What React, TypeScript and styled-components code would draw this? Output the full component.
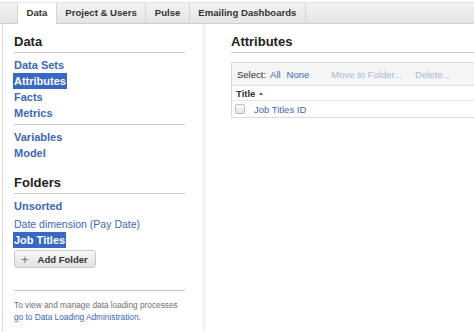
import styled, { createGlobalStyle } from "styled-components";

const GlobalStyle = createGlobalStyle`
    html, body {
        margin: 0;
        padding: 0;
        background: #fff;
    }
    body {
        font-family: "Liberation Sans", Arial, Helvetica, sans-serif;
        color: #333;
        overflow: hidden;
    }
`;

interface TabProps {
    $active?: boolean;
}

interface LinkProps {
    $selected?: boolean;
    $plain?: boolean;
    $gap?: number;
}

const Page = styled.div`
    width: 474px;
    height: 332px;
    display: flex;
    flex-direction: column;
`;

const TabBar = styled.div`
    margin-top: 2px;
    height: 20px;
    display: flex;
    padding-left: 17px;
    background: linear-gradient(#f3f3f3, #e4e4e4);
    border-top: 1px solid #e6e6e6;
    border-bottom: 1px solid #d2d2d2;
`;

const Tab = styled.div<TabProps>`
    padding: 0 8.5px;
    height: ${props => props.$active ? "21px" : "20px"};
    line-height: 20px;
    font-size: 9.6px;
    font-weight: bold;
    color: #333;
    background: ${props => props.$active ? "#fff" : "transparent"};
    border-right: 1px solid #d4d4d4;
    border-left: ${props => props.$active ? "1px solid #d4d4d4" : "none"};
    position: relative;
    z-index: 1;
`;

const Body = styled.div`
    flex: 1;
    display: flex;
    margin-left: 2px;
    border-left: 1px solid #dcdcdc;
`;

const Sidebar = styled.div`
    width: 171px;
    padding: 10px 18px 0 11px;
    border-right: 1px solid #ececec;
    box-shadow: 2px 0 3px rgba(0, 0, 0, 0.035);
    display: flex;
    flex-direction: column;
`;

const Main = styled.div`
    flex: 1;
    padding: 10px 0 0 27px;
    display: flex;
    flex-direction: column;
`;

const Heading = styled.h2<{ $top?: number }>`
    margin: ${props => props.$top ?? 0}px 0 0 0;
    font-size: 13px;
    line-height: 16px;
    font-weight: bold;
    color: #222;
    padding-bottom: 2px;
    border-bottom: 1px solid #c8c8c8;
`;

const LinkList = styled.div<{ $bottom?: number }>`
    display: flex;
    flex-direction: column;
    align-items: flex-start;
    padding: 4px 0 ${props => props.$bottom ?? 3}px;
`;

const Divider = styled.div`
    height: 1px;
    background: #c8c8c8;
`;

const NavLink = styled.span<LinkProps>`
    font-size: ${props => props.$plain ? "10.5px" : "11px"};
    line-height: 16px;
    margin-bottom: ${props => props.$gap ?? 0}px;
    font-weight: ${props => props.$plain ? "normal" : "bold"};
    color: ${props => props.$selected ? "#fff" : "#3c67b4"};
    background: ${props => props.$selected ? "#3868c4" : "transparent"};
    padding: 0 1px;
    margin-left: -1px;
`;

const AddButton = styled.button`
    margin: 2px 0 0;
    width: 82px;
    height: 18px;
    padding: 0 0 0 6px;
    display: flex;
    align-items: center;
    gap: 9px;
    border: 1px solid #c9c9c9;
    border-radius: 3px;
    background: linear-gradient(#f7f7f7, #e2e2e2);
    font-family: inherit;
    font-size: 9.5px;
    font-weight: bold;
    color: #333;
`;

const Plus = styled.span`
    font-size: 13px;
    font-weight: normal;
    color: #777;
    line-height: 13px;
`;

const Footer = styled.div`
    margin-top: 22px;
    padding-top: 8px;
    border-top: 1px solid #c8c8c8;
    font-size: 8.3px;
    line-height: 12px;
    color: #707070;
`;

const FooterLink = styled.span`
    color: #3c67b4;
`;

const Table = styled.div`
    margin-top: 9px;
    border: 1px solid #dadada;
    border-right: none;
    font-size: 9.5px;
`;

const ToolRow = styled.div`
    height: 22px;
    display: flex;
    align-items: center;
    padding-left: 5px;
    background: #f5f5f5;
    border-bottom: 1px solid #e0e0e0;
    color: #333;
`;

const Action = styled.span<{ $disabled?: boolean; $space?: number }>`
    color: ${props => props.$disabled ? "#a9b9d6" : "#3c67b4"};
    margin-left: ${props => props.$space ?? 4}px;
`;

const HeadRow = styled.div`
    height: 14px;
    display: flex;
    align-items: center;
    padding-left: 4px;
    font-weight: bold;
    color: #333;
    border-bottom: 1px solid #e6e6e6;
`;

const SortArrow = styled.span`
    width: 0;
    height: 0;
    margin-left: 4px;
    border-left: 2.5px solid transparent;
    border-right: 2.5px solid transparent;
    border-bottom: 3px solid #3c67b4;
`;

const DataRow = styled.div`
    height: 16px;
    display: flex;
    align-items: center;
    padding-left: 3px;
`;

const Check = styled.span`
    width: 8px;
    height: 8px;
    border: 1px solid #bdbdbd;
    border-radius: 2px;
    background: linear-gradient(#fdfdfd, #e4e4e4);
`;

const RowLink = styled.span`
    margin-left: 9px;
    color: #3c67b4;
`;

export default function App() {
    const tabs = ["Data", "Project & Users", "Pulse", "Emailing Dashboards"];

    return (
        <Page>
            <GlobalStyle />
            <TabBar>
                {tabs.map((t, i) => (
                    <Tab key={t} $active={i === 0}>{t}</Tab>
                ))}
            </TabBar>
            <Body>
                <Sidebar>
                    <Heading>Data</Heading>
                    <LinkList>
                        <NavLink>Data Sets</NavLink>
                        <NavLink $selected>Attributes</NavLink>
                        <NavLink>Facts</NavLink>
                        <NavLink>Metrics</NavLink>
                    </LinkList>
                    <Divider />
                    <LinkList>
                        <NavLink>Variables</NavLink>
                        <NavLink>Model</NavLink>
                    </LinkList>
                    <Heading $top={11}>Folders</Heading>
                    <LinkList $bottom={0}>
                        <NavLink $gap={2}>Unsorted</NavLink>
                        <NavLink $plain>Date dimension (Pay Date)</NavLink>
                        <NavLink $selected>Job Titles</NavLink>
                    </LinkList>
                    <AddButton>
                        <Plus>+</Plus>
                        Add Folder
                    </AddButton>
                    <Footer>
                        To view and manage data loading processes<br />
                        <FooterLink>go to Data Loading Administration</FooterLink>.
                    </Footer>
                </Sidebar>
                <Main>
                    <Heading>Attributes</Heading>
                    <Table>
                        <ToolRow>
                            Select:
                            <Action>All</Action>
                            <Action $space={6}>None</Action>
                            <Action $disabled $space={22}>Move to Folder...</Action>
                            <Action $disabled $space={13}>Delete...</Action>
                        </ToolRow>
                        <HeadRow>
                            Title
                            <SortArrow />
                        </HeadRow>
                        <DataRow>
                            <Check />
                            <RowLink>Job Titles ID</RowLink>
                        </DataRow>
                    </Table>
                </Main>
            </Body>
        </Page>
    );
}
